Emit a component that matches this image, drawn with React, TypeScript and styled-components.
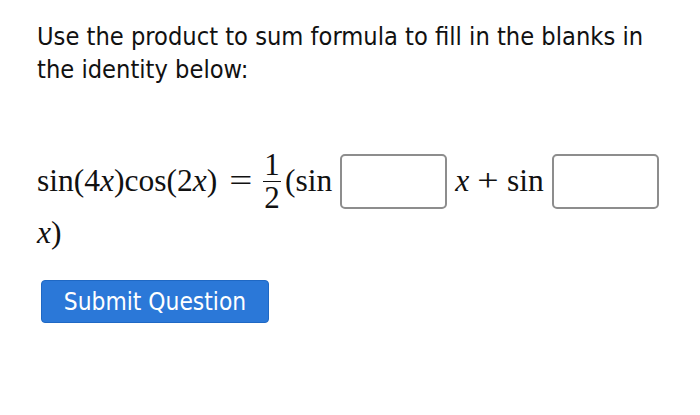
import React from "react";
import styled, {createGlobalStyle} from "styled-components";

const GlobalStyle = createGlobalStyle`
body {
margin: 0;
background: #fff;
}
`

const Page = styled.div`
padding: 20px 20px 0 37px;
color: #111;
`

const Prompt = styled.p`
margin: 0;
font-family: "DejaVu Sans Condensed", "DejaVu Sans", sans-serif;
font-size: 25.2px;
line-height: 33px;
width: 630px;
`

const MathBlock = styled.div`
margin-top: 67px;
font-family: "Liberation Serif", serif;
font-size: 31.5px;
`

const MathRow = styled.div`
display: flex;
align-items: center;
height: 56px;
white-space: pre;
& > * {
flex-shrink: 0;
}
`

const Rel = styled.span`
margin: 0 13px 0 15px;
transform: scaleX(1.3);
`

const Operator = styled.span`
margin: 0 10px;
transform: scaleX(1.2);
`

const Italic = styled.span`
font-style: italic;
`

const Fraction = styled.span`
display: inline-flex;
flex-direction: column;
align-items: center;
width: 18px;
font-size: 31px;
line-height: 28px;
margin: 0 4px 0 0;
`

const FracBar = styled.span`
width: 18px;
border-top: 1.5px solid #111;
margin: 2px 0;
`

const Blank = styled.input`
width: 107px;
height: 55px;
box-sizing: border-box;
border: 2px solid #8d8d8d;
border-radius: 5px;
margin: 0 8px 0 8px;
`

const SecondBlank = styled(Blank)`
margin-left: 8px;
`

const SecondRow = styled.div`
margin-top: 6px;
`

const SubmitButton = styled.button`
margin: 29px 0 0 4px;
width: 228px;
height: 43px;
background: #2b78d8;
border: 1px solid #1f68c4;
border-radius: 4px;
color: #fff;
font-family: "DejaVu Sans Condensed", "DejaVu Sans", sans-serif;
font-size: 24.3px;
padding: 0;
`

export default function App() {
    return <Page>
        <GlobalStyle/>
        <Prompt>Use the product to sum formula to fill in the blanks in the identity below:</Prompt>
        <MathBlock>
            <MathRow>
                <span>sin(4<Italic>x</Italic>)cos(2<Italic>x</Italic>)</span>
                <Rel>=</Rel>
                <Fraction>
                    <span>1</span>
                    <FracBar/>
                    <span>2</span>
                </Fraction>
                <span>(sin</span>
                <Blank type="text"/>
                <Italic>x</Italic>
                <Operator>+</Operator>
                <span>sin</span>
                <SecondBlank type="text"/>
            </MathRow>
            <SecondRow><Italic>x</Italic>)</SecondRow>
        </MathBlock>
        <SubmitButton>Submit Question</SubmitButton>
    </Page>
}
